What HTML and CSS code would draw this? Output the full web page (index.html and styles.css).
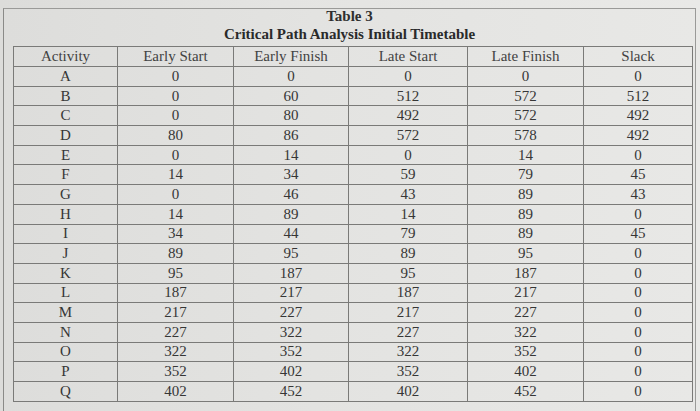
FILE: index.html
```html
<!DOCTYPE html>
<html>
<head>
<meta charset="utf-8">
<link rel="stylesheet" href="styles.css">
</head>
<body>
<div class="sheet">
  <div class="title">Table 3</div>
  <div class="subtitle">Critical Path Analysis Initial Timetable</div>
  <table class="timetable">
    <colgroup>
      <col class="c1"><col class="c2"><col class="c3"><col class="c4"><col class="c5"><col class="c6">
    </colgroup>
    <thead>
      <tr><th>Activity</th><th>Early Start</th><th>Early Finish</th><th>Late Start</th><th>Late Finish</th><th>Slack</th></tr>
    </thead>
    <tbody>
      <tr><td>A</td><td>0</td><td>0</td><td>0</td><td>0</td><td>0</td></tr>
      <tr><td>B</td><td>0</td><td>60</td><td>512</td><td>572</td><td>512</td></tr>
      <tr><td>C</td><td>0</td><td>80</td><td>492</td><td>572</td><td>492</td></tr>
      <tr><td>D</td><td>80</td><td>86</td><td>572</td><td>578</td><td>492</td></tr>
      <tr><td>E</td><td>0</td><td>14</td><td>0</td><td>14</td><td>0</td></tr>
      <tr><td>F</td><td>14</td><td>34</td><td>59</td><td>79</td><td>45</td></tr>
      <tr><td>G</td><td>0</td><td>46</td><td>43</td><td>89</td><td>43</td></tr>
      <tr><td>H</td><td>14</td><td>89</td><td>14</td><td>89</td><td>0</td></tr>
      <tr><td>I</td><td>34</td><td>44</td><td>79</td><td>89</td><td>45</td></tr>
      <tr><td>J</td><td>89</td><td>95</td><td>89</td><td>95</td><td>0</td></tr>
      <tr><td>K</td><td>95</td><td>187</td><td>95</td><td>187</td><td>0</td></tr>
      <tr><td>L</td><td>187</td><td>217</td><td>187</td><td>217</td><td>0</td></tr>
      <tr><td>M</td><td>217</td><td>227</td><td>217</td><td>227</td><td>0</td></tr>
      <tr><td>N</td><td>227</td><td>322</td><td>227</td><td>322</td><td>0</td></tr>
      <tr><td>O</td><td>322</td><td>352</td><td>322</td><td>352</td><td>0</td></tr>
      <tr><td>P</td><td>352</td><td>402</td><td>352</td><td>402</td><td>0</td></tr>
      <tr><td>Q</td><td>402</td><td>452</td><td>402</td><td>452</td><td>0</td></tr>
    </tbody>
  </table>
</div>
</body>
</html>
```

FILE: styles.css
```css
html, body {
  margin: 0;
  padding: 0;
}
body {
  width: 700px;
  height: 411px;
  overflow: hidden;
  background: linear-gradient(90deg, #dcdcda 0%, #e4e4e2 40%, #e9e9e7 100%);
  font-family: "Liberation Serif", "Times New Roman", serif;
  color: #3b3b3b;
}
.sheet {
  margin: 8px 0 0 3px;
  width: 693px;
  height: 403px;
  border-top: 1px solid #9a9a98;
  border-left: 1px solid #8a8a88;
  border-right: 1px solid #9a9a98;
  box-sizing: border-box;
  background: linear-gradient(90deg, #dddddb 0%, #e3e3e1 45%, #e8e8e6 100%);
}
.title {
  text-align: center;
  font-weight: bold;
  font-size: 15px;
  line-height: 15px;
  height: 15px;
  color: #2e2e2e;
}
.subtitle {
  text-align: center;
  font-weight: bold;
  font-size: 15px;
  line-height: 21px;
  height: 21px;
  color: #2a2a2a;
}
.timetable {
  margin: 1px 0 0 9px;
  border-collapse: collapse;
  table-layout: fixed;
  width: 679px;
  font-size: 15px;
  border: 1px solid #6e6e6c;
}
.c1 { width: 104px; }
.c2 { width: 116px; }
.c3 { width: 115px; }
.c4 { width: 119px; }
.c5 { width: 116px; }
.c6 { width: 109px; }
.timetable th,
.timetable td {
  border: 1px solid #7a7a78;
  padding: 0;
  text-align: center;
  font-weight: normal;
  line-height: 17px;
  height: 18.7px;
  color: #363636;
}
.timetable th {
  height: 19px;
  color: #424242;
}
```
